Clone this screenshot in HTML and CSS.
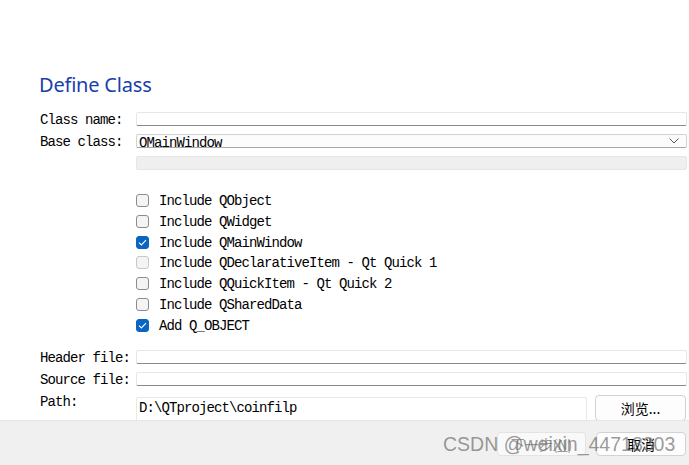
FILE: index.html
```html
<!DOCTYPE html>
<html>
<head>
<meta charset="utf-8">
<link rel="stylesheet" href="styles.css">
</head>
<body>
<div class="dialog">
  <div class="content">
    <h1 class="title">Define Class</h1>
    <div class="form">
      <label class="lbl">Class name:</label>
      <div class="edit"></div>
      <label class="lbl">Base class:</label>
      <div class="combo"><span class="val">QMainWindow</span>
        <svg class="chev" width="10" height="6" viewBox="0 0 10 6"><path d="M0.5 0.5 L5 5 L9.5 0.5" fill="none" stroke="#555" stroke-width="1"/></svg>
      </div>
      <span></span>
      <div class="edit disabled"></div>
    </div>
    <div class="checks">
      <div class="chk"><span class="box"></span><span>Include QObject</span></div>
      <div class="chk"><span class="box"></span><span>Include QWidget</span></div>
      <div class="chk"><span class="box on"><svg width="9" height="7" viewBox="0 0 9 7"><path d="M1 3.6 L3.4 6 L8 1.2" fill="none" stroke="#fff" stroke-width="1.1"/></svg></span><span>Include QMainWindow</span></div>
      <div class="chk"><span class="box light"></span><span>Include QDeclarativeItem - Qt Quick 1</span></div>
      <div class="chk"><span class="box"></span><span>Include QQuickItem - Qt Quick 2</span></div>
      <div class="chk"><span class="box"></span><span>Include QSharedData</span></div>
      <div class="chk"><span class="box on"><svg width="9" height="7" viewBox="0 0 9 7"><path d="M1 3.6 L3.4 6 L8 1.2" fill="none" stroke="#fff" stroke-width="1.1"/></svg></span><span>Add Q_OBJECT</span></div>
    </div>
    <div class="form files">
      <label class="lbl">Header file:</label>
      <div class="edit"></div>
      <label class="lbl">Source file:</label>
      <div class="edit"></div>
    </div>
    <div class="pathrow">
      <label class="lbl plbl">Path:</label>
      <div class="pathedit">D:\QTproject\coinfilp</div>
      <button class="btn browse">浏览...</button>
    </div>
  </div>
  <div class="footer">
    <button class="btn next">下一步(<u>N</u>)</button>
    <button class="btn">取消</button>
    <div class="watermark">CSDN @weixin_44718303</div>
  </div>
</div>
</body>
</html>
```
FILE: styles.css
```css
html, body {
  margin: 0;
  padding: 0;
  background: #fff;
}
.dialog {
  width: 689px;
  height: 465px;
  overflow: hidden;
  display: flex;
  flex-direction: column;
  font-family: "Liberation Mono", "Noto Sans CJK SC", monospace;
  font-size: 14px;
  letter-spacing: -0.9px;
  color: #000;
}
.content {
  height: 420px;
  overflow: hidden;
  padding: 0 2px 0 40px;
  box-sizing: border-box;
}
.title {
  margin: 71px 0 13px -1px;
  height: 28px;
  font-family: "Noto Sans", "Open Sans", sans-serif;
  font-weight: 400;
  font-size: 20px;
  line-height: 28px;
  letter-spacing: -0.2px;
  color: #1a3fa9;
}
.form {
  display: grid;
  grid-template-columns: 96px 1fr;
  row-gap: 7px;
}
.lbl {
  height: 14px;
  line-height: 14px;
  padding-top: 1px;
  white-space: nowrap;
}
.edit {
  height: 14px;
  box-sizing: border-box;
  border: 1px solid #e6e6e6;
  border-bottom: 1px solid #8a8a8a;
  border-radius: 2px;
  background: #fff;
}
.edit.disabled {
  background: #efefef;
  border: 1px solid #e6e6e6;
}
.combo {
  height: 14px;
  box-sizing: border-box;
  border: 1px solid #d2d2d2;
  border-bottom-color: #a8a8a8;
  border-radius: 2px;
  background: #fcfcfc;
  display: flex;
  align-items: center;
  justify-content: space-between;
  overflow: hidden;
}
.combo .val {
  padding-left: 2px;
  line-height: 14px;
  margin-top: 4px;
  color: #000;
}
.chev {
  margin-right: 7px;
}
.checks {
  margin: 20px 0 14px 96px;
  display: flex;
  flex-direction: column;
}
.chk {
  height: 20.83px;
  display: flex;
  align-items: center;
  gap: 10px;
  white-space: nowrap;
}
.chk span:last-child {
  padding-top: 1px;
}
.box {
  width: 13px;
  height: 13px;
  box-sizing: border-box;
  border: 1px solid #8c8c8c;
  border-radius: 3px;
  background: #f4f4f4;
  flex: none;
  display: flex;
  align-items: center;
  justify-content: center;
}
.box.light {
  border-color: #c8c8c8;
}
.box.on {
  background: #0a64c2;
  border-color: #0a64c2;
}
.files {
  margin-bottom: 8px;
}
.pathrow {
  display: flex;
  align-items: flex-start;
}
.plbl {
  width: 96px;
  flex: none;
  padding-top: 0;
}
.pathedit {
  flex: 1;
  height: 30px;
  margin-top: 2px;
  box-sizing: border-box;
  border: 1px solid #e8e8e8;
  border-radius: 2px;
  padding: 2px 0 0 2px;
  line-height: 16px;
  background: #fff;
}
.btn {
  font-family: "Noto Sans CJK SC", "Noto Sans", sans-serif;
  font-size: 14px;
  letter-spacing: 0;
  color: #000;
  background: #fdfdfd;
  border: 1px solid #d3d3d3;
  border-radius: 4px;
  padding: 0;
  box-sizing: border-box;
}
.browse {
  width: 91px;
  height: 26px;
  margin-left: 8px;
  margin-right: 1px;
  line-height: 20px;
}
.footer {
  position: relative;
  flex: 1;
  background: #f0f0f0;
  border-top: 1px solid #e6e6e6;
  display: flex;
  justify-content: flex-end;
  align-items: flex-start;
  gap: 10px;
  padding: 11px 3px 0 0;
}
.footer .btn {
  width: 90px;
  height: 24px;
  line-height: 20px;
}
.footer .next {
  width: 89px;
  background: #f9f9f9;
  border-color: #e4e4e4;
  color: #9c9c9c;
}
.next u {
  text-decoration: underline;
}
.watermark {
  position: absolute;
  left: 443px;
  top: 12px;
  font-family: "Liberation Sans", Arial, sans-serif;
  font-size: 19.5px;
  letter-spacing: 0;
  color: rgba(110, 110, 110, 0.7);
  white-space: nowrap;
  pointer-events: none;
}
```
